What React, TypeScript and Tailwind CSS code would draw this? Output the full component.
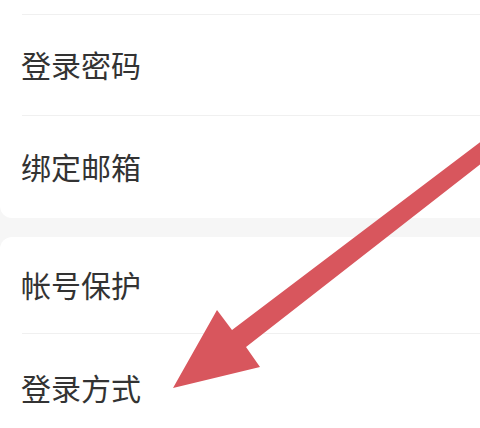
import React from 'react';

// --- Row ---
const Row: React.FC<{ label: string; height: string }> = ({ label, height }) => (
  <div className={`flex items-center pl-[21px] ${height}`}>
    <span className="-mt-[3px] text-[30px] leading-none text-[#333333]">{label}</span>
  </div>
);

const Divider = () => <div className="ml-[22px] h-px bg-[#f0f0f0]" />;

// --- Arrow overlay ---
const Arrow = () => (
  <svg className="pointer-events-none absolute inset-0" width="480" height="428" viewBox="0 0 480 428">
    <polygon
      points="173,388 217,310 232,330 500,127 500,149 246,347 260,367"
      fill="#d8565d"
    />
  </svg>
);

export default function App() {
  return (
    <div
      className="relative h-[428px] w-[480px] overflow-hidden bg-[#f6f6f6]"
      style={{ fontFamily: '"Noto Sans CJK SC", "Noto Sans", sans-serif' }}
    >
      <div className="-mr-[20px] rounded-b-[12px] bg-white">
        <div className="h-[14px]" />
        <Divider />
        <Row label="登录密码" height="h-[100px]" />
        <Divider />
        <Row label="绑定邮箱" height="h-[102px]" />
      </div>
      <div className="-mr-[20px] mt-[19px] rounded-t-[12px] bg-white">
        <Row label="帐号保护" height="h-[96px]" />
        <Divider />
        <Row label="登录方式" height="h-[108px]" />
      </div>
      <Arrow />
    </div>
  );
}
